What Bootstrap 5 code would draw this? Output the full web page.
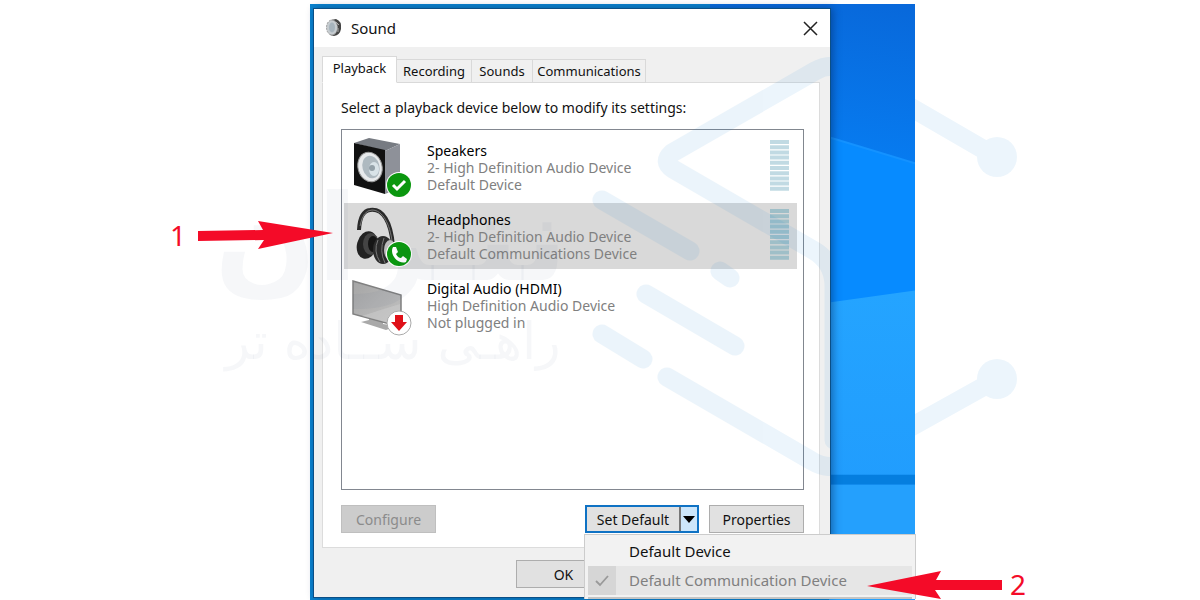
<!DOCTYPE html>
<html lang="en">
<head>
<meta charset="utf-8">
<meta name="viewport" content="width=device-width, initial-scale=1">
<title>Sound</title>
<link href="https://cdn.jsdelivr.net/npm/bootstrap@5.3.0/dist/css/bootstrap.min.css" rel="stylesheet">
<style>
body{font-family:"Noto Sans","Open Sans",sans-serif;font-size:14px;line-height:17px;color:#111;background:#fff}
.stage{display:grid;grid-template-columns:310fr 605fr 285fr;padding-top:4px;overflow:hidden}
.desktop{grid-column:2;padding:4px 84px 3px 3px;background:#0a84d4}
.wallpaper{position:absolute;inset:0;width:100%;height:100%}
.dialog-win{background:#f0f0f0;border:1px solid #0b4f86;box-shadow:2px 0 8px rgba(0,30,80,.45)}
.title-row{height:38px;padding:0 12px 0 11px;background:#fff;font-size:15px}
.title-row button{line-height:0}
.dialog-inner{padding:9px 10px 9px 8px}
.tab-strip{border:0;height:27px;align-items:flex-end}
.tab-strip .nav-link{border:1px solid #d9d9d9;border-left:0;border-radius:0;margin:0;padding:2px 0;height:24px;font-size:13px;color:#111;background:#f0f0f0;text-align:center;white-space:nowrap}
.tab-strip .nav-link.active{height:27px;padding:3px 0 5px;background:#fff;border:1px solid #d9d9d9;border-bottom-color:#fff;color:#111}
.w-play,.w-rec{width:75px}.w-snd{width:61px}.w-com{width:113px}
.panel{background:#fff;border:1px solid #dcdcdc;margin-top:-1px;padding:16px 15px 14px 18px}
.device-list{min-height:361px;border:1px solid #828790;border-radius:0;padding:4px 6px 4px 2px;gap:3px;margin-top:13px}
.device{height:66px;padding:8px 8px 0 8px;border:0;background:transparent;color:#808080}
.device.chosen{background:#d9d9d9}
.device-icon{width:64px;height:62px;margin:-4px 11px 0 0;flex:none}
.meter{width:19px;height:51px;margin-top:-2px;flex:none;fill:#c2dbe3}
.chosen .meter{fill:#9fbfc8}
.btn-win{height:28px;padding:0 4px;border:1px solid #adadad;border-radius:0;background:#e1e1e1;color:#111;font-size:14px;line-height:17px;width:95px}
.btn-win:disabled{background:#ccc;border-color:#bfbfbf;color:#8b8b8b;opacity:1}
.button-line{margin-top:15px}
.button-line .split{margin-right:10px}
.ok-row{margin-top:12px;padding-left:194px}
.split{width:114px;height:28px;border:2px solid #0f72c4;background:#e1e1e1}
.split button{border:0;background:none;padding:0;color:#111}
.split .arrow-btn{width:18px;background:#cce6fb;border-left:2px solid #777;line-height:0}
.drop{position:absolute;top:27px;left:-3px;width:332px;border:1px solid #ccc;border-bottom:0;background:#f2f2f2;padding:2px 3px 0;z-index:3;font-size:15px}
.drop button{display:flex;align-items:center;width:100%;height:29px;color:#111}
.drop .tick{width:28px;height:29px;margin-right:13px;display:flex;align-items:center;justify-content:center}
.drop button:disabled{background:#e6e6e6;color:#808080}
.drop button:disabled .tick{background:#d6d6d6}
.drop hr{margin:2px 0 0;border-top:2px solid #c4c4c4;opacity:1}
.mark-layer{position:absolute;left:-310px;top:-4px;width:1200px;height:600px;pointer-events:none;z-index:2}
.callout{position:absolute;z-index:5;gap:12px;color:#f40b28;font-size:28px;line-height:30px}
.callout-one{right:582px;top:216px}
.callout-two{left:557px;top:565px;gap:8px}
</style>
</head>
<body>
<main class="stage">
<div class="desktop position-relative">
  <svg class="wallpaper" viewBox="0 0 605 596" preserveAspectRatio="none" aria-hidden="true">
    <defs>
      <linearGradient id="sky" x1="1" y1="0" x2=".8" y2="1"><stop offset="0" stop-color="#0868da"/><stop offset="1" stop-color="#077df2"/></linearGradient>
      <linearGradient id="low" x1="0" y1="0" x2="0" y2="1"><stop offset="0" stop-color="#24a4ff"/><stop offset="1" stop-color="#209bfd"/></linearGradient>
    </defs>
    <path fill="#0a84d0" d="M0 0H605V596H0z"/>
    <path fill="url(#sky)" d="M400 0H605V170H400z"/>
    <path fill="#078bff" d="M519 133L605 159V300H519z"/>
    <path stroke="#1492ff" stroke-width="2" d="M519 133L605 159"/>
    <path fill="url(#low)" d="M519 298L605 286V530H519z"/>
    <path fill="#057edf" d="M519 470H605V480H519z"/>
    <path fill="#24a0fd" d="M519 480H605V596H519z"/>
  </svg>

  <section class="dialog-win position-relative" aria-label="Sound">
    <header class="title-row d-flex align-items-center">
      <svg width="18" height="20" viewBox="0 0 18 20" class="me-2" aria-hidden="true"><path d="M6 2L11 1Q17 3 16 11Q15 17 9 18L5 17z" fill="#454545"/><ellipse cx="7" cy="9.500" rx="5.500" ry="7.500" fill="#c6ccd0" stroke="#999" stroke-dasharray="2 1"/><ellipse cx="7" cy="9.500" rx="3" ry="5" fill="#a7b4bd"/><path d="M11 4L14 7M13 10V14" stroke="#aaa"/></svg>
      <span>Sound</span>
      <button class="btn p-0 border-0 ms-auto" type="button" aria-label="Close"><svg width="15" height="15" viewBox="0 0 15 15"><path d="M1 1L14 14M14 1L1 14" stroke="#222" stroke-width="1.500"/></svg></button>
    </header>
    <div class="dialog-inner">
      <div class="nav nav-tabs tab-strip flex-nowrap" role="tablist">
        <button class="nav-link active w-play" role="tab" type="button">Playback</button>
        <button class="nav-link w-rec" role="tab" type="button">Recording</button>
        <button class="nav-link w-snd" role="tab" type="button">Sounds</button>
        <button class="nav-link w-com" role="tab" type="button">Communications</button>
      </div>
      <div class="panel">
        <div>Select a playback device below to modify its settings:</div>
        <div class="list-group device-list">
          <div class="list-group-item device d-flex">
            <svg class="device-icon" viewBox="0 0 64 62" aria-hidden="true">
              <path d="M2 5L17 0L48 6L33 13z" fill="#777b82"/><path d="M33 13L48 6V50L33 56z" fill="#8e9199"/><path d="M2 5L33 12V56L2 47z" fill="#111"/>
              <ellipse cx="18" cy="29" rx="12" ry="15" fill="#e8eaec" stroke="#999" stroke-width="1" transform="rotate(-15 18 29)"/><ellipse cx="19" cy="29" rx="8.500" ry="11.500" fill="#aeb9c0" transform="rotate(-15 19 29)"/><ellipse cx="22" cy="31" rx="5" ry="7" fill="#d9e3e8"/><circle cx="20" cy="30" r="3" fill="#93a0a8"/>
              <circle cx="47" cy="47" r="13" fill="#fff"/><circle cx="47" cy="47" r="12" fill="#0b970f"/><path d="M41 47L45 51L53 43" fill="none" stroke="#fff" stroke-width="3"/>
            </svg>
            <div class="flex-grow-1"><div class="text-black">Speakers</div><div>2- High Definition Audio Device</div><div>Default Device</div></div>
            <svg class="meter" viewBox="0 0 19 51" aria-hidden="true"><path id="bars" d="M0 0h19v4H0zm0 5.200h19v4H0zm0 5.200h19v4H0zm0 5.200h19v4H0zm0 5.200h19v4H0zm0 5.200h19v4H0zm0 5.200h19v4H0zm0 5.200h19v4H0zm0 5.200h19v4H0zm0 5.200h19v4H0z"/></svg>
          </div>
          <div class="list-group-item device chosen d-flex">
            <svg class="device-icon" viewBox="0 0 64 62" aria-hidden="true">
              <path d="M7 23Q8 4 18 3C31 1 39 15 41 39" fill="none" stroke="#2a2a2a" stroke-width="4"/><path d="M8 19Q11 3 20 3C31 3 38 18 40 34" fill="none" stroke="#777" stroke-width="1"/>
              <ellipse cx="15" cy="38" rx="10" ry="14" fill="#222" transform="rotate(15 15 38)"/><ellipse cx="19" cy="37" rx="8" ry="11" fill="#444"/><ellipse cx="21" cy="37" rx="5" ry="8" fill="#151515"/>
              <ellipse cx="31" cy="43" rx="10" ry="14" fill="#2b2b2b"/><path d="M26 33Q21 44 28 55M32 31Q27 44 33 56" fill="none" stroke="#777"/><ellipse cx="38" cy="43" rx="6" ry="10" fill="#bbb"/>
              <circle cx="47" cy="47" r="13" fill="#fff"/><circle cx="47" cy="47" r="12" fill="#0b970f"/><path d="M41 40l3 0 2 5-2 2q2 4 5 4l2-2 4 3-1 3c-8 3-17-8-13-15z" fill="#fff"/>
            </svg>
            <div class="flex-grow-1"><div class="text-black">Headphones</div><div>2- High Definition Audio Device</div><div>Default Communications Device</div></div>
            <svg class="meter" viewBox="0 0 19 51" aria-hidden="true"><use href="#bars"/></svg>
          </div>
          <div class="list-group-item device d-flex">
            <svg class="device-icon" viewBox="0 0 64 62" aria-hidden="true">
              <defs><linearGradient id="scr" x2="1" y2="1"><stop stop-color="#a5a5a5"/><stop offset="1" stop-color="#c2c2c2"/></linearGradient></defs>
              <path d="M17 39L31 42V48L45 50L34 54L9 46L17 44z" fill="#a9a9a9"/><path d="M1 5L49 19V51L1 38z" fill="url(#scr)" stroke="#808080" stroke-width="1.500"/><path d="M48 20V28Q28 34 10 40L48 50z" fill="#d0d0d0" opacity=".45"/>
              <circle cx="47" cy="47" r="12" fill="#fff" stroke="#aaa"/><path d="M43 39H51V46H55L47 55L39 46H43z" fill="#df1018"/>
            </svg>
            <div class="flex-grow-1"><div class="text-black">Digital Audio (HDMI)</div><div>High Definition Audio Device</div><div>Not plugged in</div></div>
          </div>
        </div>
        <div class="d-flex button-line">
          <button class="btn btn-win" type="button" disabled>Configure</button>
          <div class="split ms-auto position-relative d-flex">
            <button class="flex-grow-1" type="button">Set Default</button>
            <button class="arrow-btn" type="button" aria-label="More default options"><svg width="12" height="7" viewBox="0 0 12 7"><path d="M0 0H12L6 7z"/></svg></button>
            <div class="drop">
              <button type="button"><span class="tick"></span>Default Device</button>
              <button type="button" disabled><span class="tick"><svg width="14" height="12" viewBox="0 0 14 12"><path d="M1 6L5 10L13 1" fill="none" stroke="#999" stroke-width="1.800"/></svg></span>Default Communication Device</button>
              <hr>
            </div>
          </div>
          <button class="btn btn-win" type="button">Properties</button>
        </div>
      </div>
      <div class="d-flex ok-row"><button class="btn btn-win" type="button">OK</button></div>
    </div>
  </section>

  <svg class="mark-layer" viewBox="0 0 1200 600" aria-hidden="true">
    <clipPath id="off-wallpaper"><path d="M0 0H830V600H0zM915 0H1200V600H915z"/></clipPath>
    <g clip-path="url(#off-wallpaper)">
      <g opacity=".08" fill="none" stroke="#1480d0" stroke-width="19" stroke-linecap="round" stroke-linejoin="round">
        <path d="M981 148L850 72Q832 61 815 71L672 153Q662 162 673 169L813 250Q834 262 834 286V440"/>
        <path d="M602 200L690 251M720 271L730 278M646 294L735 346M602 334L643 359M667 377L812 461Q830 472 850 461L981 388"/>
        <g fill="#1480d0" stroke="none"><circle cx="997" cy="157" r="20"/><circle cx="997" cy="379" r="20"/></g>
      </g>
    </g>
    <g fill="#223060" fill-opacity=".04" font-family="DejaVu Sans, sans-serif" direction="rtl" text-anchor="middle">
      <text x="391" y="280" font-size="120" font-weight="bold">نتـران</text>
      <text x="393" y="359" font-size="51">راهـی ســاده تر</text>
    </g>
  </svg>

  <div class="callout callout-one d-flex align-items-center"><span>1</span><svg width="135" height="30" viewBox="0 0 135 30" aria-hidden="true"><path fill="#f40b28" d="M0 11L65 10L60 1L135 13L60 29L66 20L0 21z"/></svg></div>
  <div class="callout callout-two d-flex align-items-center"><svg width="135" height="30" viewBox="0 0 135 30" aria-hidden="true"><path fill="#f40b28" d="M135 11H69L74 2L0 17L74 30L68 21H135z"/></svg><span>2</span></div>
</div>
</main>
<script src="https://cdn.jsdelivr.net/npm/bootstrap@5.3.0/dist/js/bootstrap.bundle.min.js"></script>
</body>
</html>
